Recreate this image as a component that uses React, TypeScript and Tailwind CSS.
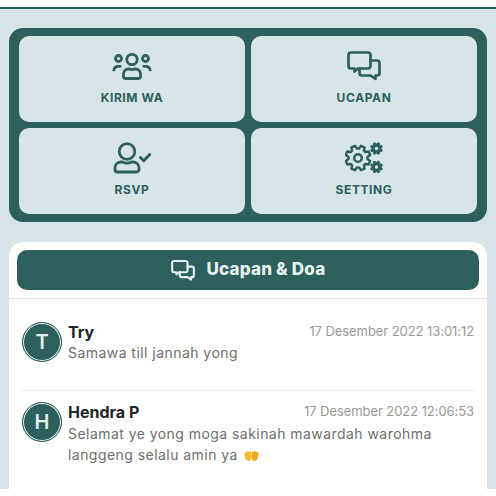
import React from "react";

const C = "#2d5f5d";

function Users() {
  return (
    <svg width="40" height="28" viewBox="0 0 40 28" fill="none" stroke={C} strokeWidth="2.800" strokeLinecap="round" strokeLinejoin="round">
      <circle cx="20" cy="7.500" r="5.200" />
      <circle cx="6.500" cy="6.500" r="3" />
      <circle cx="33.500" cy="6.500" r="3" />
      <path d="M13.500 26.500h13a2 2 0 0 0 2-2v-2.500c0-3-2.200-5-5-5h-1c-1.600.800-3.400.800-5 0h-1c-2.800 0-5 2-5 5v2.500a2 2 0 0 0 2 2z" />
      <path d="M1.800 18c.500-2 2-3.700 4-3.700h2.500" />
      <path d="M38.200 18c-.500-2-2-3.700-4-3.700h-2.500" />
    </svg>
  );
}
function Chats({ color = C, w = 34, h = 30, sw = 2.700 }: { color?: string; w?: number; h?: number; sw?: number }) {
  return (
    <svg width={w} height={h} viewBox="0 0 34 30" fill="none" stroke={color} strokeWidth={sw} strokeLinejoin="round" strokeLinecap="round">
      <path d="M4 1.500h17a2.500 2.500 0 0 1 2.500 2.500v11a2.500 2.500 0 0 1-2.500 2.500H11l-3.500 3v-3H4A2.500 2.500 0 0 1 1.500 15V4A2.500 2.500 0 0 1 4 1.500z" />
      <path d="M23.500 9.500H30a2.500 2.500 0 0 1 2.500 2.500v10a2.500 2.500 0 0 1-2.500 2.500h-1.500v3.500l-5-3.500H15a2.500 2.500 0 0 1-2.500-2.500v-4.500" />
    </svg>
  );
}
function UserCheck() {
  return (
    <svg width="38" height="32" viewBox="0 0 38 32" fill="none" stroke={C} strokeWidth="2.800" strokeLinecap="round" strokeLinejoin="round">
      <circle cx="14" cy="9.500" r="7.800" />
      <path d="M4.500 30h19a2.500 2.500 0 0 0 2.500-2.500V26c0-3.500-2.700-6-6-6h-1.500c-2.800 1.300-6.200 1.300-9 0H8c-3.300 0-6 2.500-6 6v1.500A2.500 2.500 0 0 0 4.500 30z" />
      <path d="M27.500 15.500l3.200 3.200 6-6.200" strokeWidth="3" />
    </svg>
  );
}
function gearPoints(x: number, y: number, r: number) {
  const pts: string[] = [];
  [0, 45, 90, 135, 180, 225, 270, 315].forEach((a) => {
    const rr = [r * 0.76, r, r, r * 0.76];
    [-16, -9, 9, 16].forEach((d, i) => {
      const t = ((a + 22.500 + d) * Math.PI) / 180;
      pts.push(`${(x + rr[i] * Math.cos(t)).toFixed(2)},${(y + rr[i] * Math.sin(t)).toFixed(2)}`);
    });
  });
  return pts.join(" ");
}
function Gears() {
  return (
    <svg width="38" height="32" viewBox="0 0 38 32" fill="none" stroke={C} strokeLinejoin="round">
      <polygon points={gearPoints(13, 16, 12.500)} strokeWidth="2.500" />
      <circle cx="13" cy="16" r="3.800" strokeWidth="2.500" />
      <polygon points={gearPoints(31.500, 6.500, 6)} fill={C} strokeWidth="1" />
      <circle cx="31.500" cy="6.500" r="1.700" fill="#d7e5e9" stroke="none" />
      <polygon points={gearPoints(31.500, 25, 6)} fill={C} strokeWidth="1" />
      <circle cx="31.500" cy="25" r="1.700" fill="#d7e5e9" stroke="none" />
    </svg>
  );
}
function Hands() {
  return (
    <svg width="15" height="11" viewBox="0 0 15 11" className="inline-block ml-[2px] align-[-1px]">
      <path d="M.500 4C.500 1.800 2 1.500 2.500 2.500 3 .500 5 .500 5.300 2c.800-.800 2-.300 2 1v5.500c0 1.500-1 2.500-2.500 2.500C2 11 .500 7.500.500 4z" fill="#f4b833" />
      <path d="M14.500 4c0-2.200-1.500-2.500-2-1.500C12 .500 10 .500 9.700 2c-.800-.800-2-.300-2 1v5.500c0 1.500 1 2.500 2.500 2.500 2.800 0 4.300-3.500 4.300-7z" fill="#f0a91f" />
    </svg>
  );
}

function Tile({ icon, label }: { icon: React.ReactNode; label: string }) {
  return (
    <div className="h-[86px] rounded-[10px] bg-[#d7e5e9] flex flex-col items-center pt-[14px]">
      <div className="h-[32px] flex items-center justify-center">{icon}</div>
      <div className="mt-[8px] text-[12px] leading-[16px] font-bold tracking-[0.6px] text-[#2d5f5d]">{label}</div>
    </div>
  );
}

function Avatar({ letter }: { letter: string }) {
  return (
    <div className="w-[40px] h-[40px] shrink-0 rounded-full bg-[#2d5f5d] border border-[#2d5f5d] flex items-center justify-center text-[20px] font-semibold text-[#e2eef0] shadow-[inset_0_0_0_1px_#fff]">
      {letter}
    </div>
  );
}

function Comment({ letter, name, date, children, h, gap }: { letter: string; name: string; date: string; children: React.ReactNode; h: string; gap: string }) {
  return (
    <div className={`flex gap-[6px] pl-[13px] pr-[13px] ${h}`}>
      <Avatar letter={letter} />
      <div className="flex-1 min-w-0">
        <div className="flex justify-between items-start">
          <span className="text-[16px] leading-[20px] font-bold text-[#212529]">{name}</span>
          <span className="text-[13px] leading-[18px] text-[#979797] tracking-[-0.07px]">{date}</span>
        </div>
        <div className={`${gap} text-[14px] leading-[21px] text-[#6e6e6e] tracking-[0.45px]`}>{children}</div>
      </div>
    </div>
  );
}

export default function App() {
  return (
    <div className="h-[496px] w-[496px] overflow-hidden bg-white font-['Inter','Noto_Sans',sans-serif]">
      <div className="mt-[7px] h-[482px] overflow-hidden border-t-2 border-[#1f5a57] bg-[#d7e5e9] px-[9px] pt-[19px]">
        <div className="rounded-[14px] bg-[#2d5f5d] px-[10px] py-[8px] grid grid-cols-2 gap-[6px]">
          <Tile icon={<Users />} label="KIRIM WA" />
          <Tile icon={<Chats />} label="UCAPAN" />
          <Tile icon={<UserCheck />} label="RSVP" />
          <Tile icon={<Gears />} label="SETTING" />
        </div>
        <div className="mt-[20px] h-[260px] rounded-t-[14px] bg-white">
          <div className="px-[8px] pt-[8px] pb-[8px] border-b border-[#e3e5e6]">
            <div className="h-[40px] rounded-[10px] bg-[#2d5f5d] flex items-center justify-center gap-[12px]">
              <Chats color="#e6f0f2" w={24} h={21} sw={3} />
              <span className="text-[17px] font-extrabold tracking-[0.2px] text-[#e6f0f2]">Ucapan &amp; Doa</span>
            </div>
          </div>
          <div className="pt-[23px]">
            <Comment letter="T" name="Try" date="17 Desember 2022 13:01:12" h="h-[68px]" gap="mt-0">
              Samawa till jannah yong
            </Comment>
            <div className="mx-[11px] border-t border-[#eceeef]" />
            <div className="pt-[11px]">
              <Comment letter="H" name="Hendra P" date="17 Desember 2022 12:06:53" h="h-[70px]" gap="mt-[1px]">
                Selamat ye yong moga sakinah mawardah warohma langgeng selalu amin ya <Hands />
              </Comment>
            </div>
          </div>
        </div>
      </div>
    </div>
  );
}
